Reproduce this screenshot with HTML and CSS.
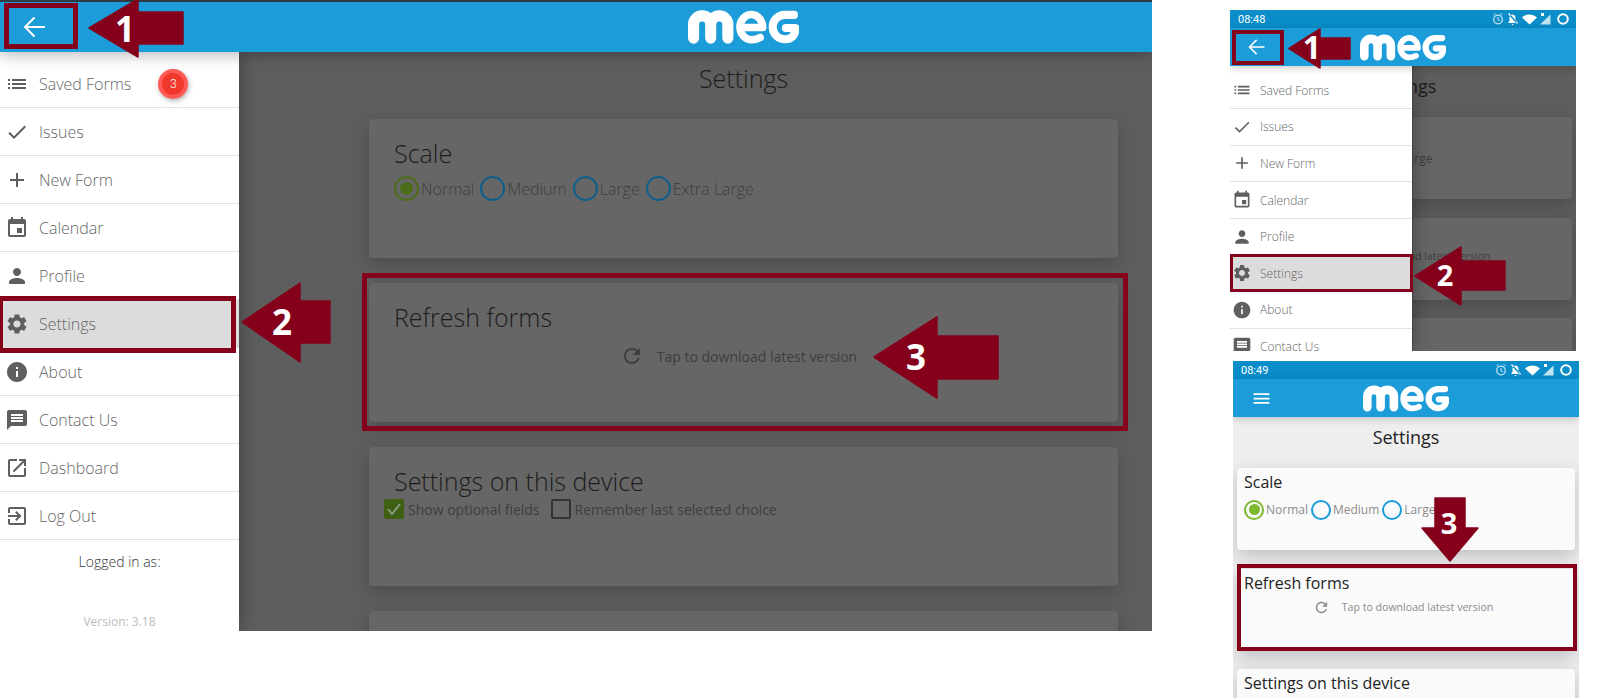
FILE: index.html
```html
<!DOCTYPE html>
<html lang="en">
<head>
  <meta charset="UTF-8" />
  <title>MEG | Refresh forms</title>
  <link rel="stylesheet" href="styles.css">
</head>
<body>
  <svg class="sprites" width="0" height="0">
    <symbol id="logo" viewBox="0 0 110 33">
      <g fill="none" stroke="#fff" stroke-linecap="round" stroke-linejoin="round">
        <path stroke-width="11" d="M5.5 27.5V14a8.5 8.5 0 0 1 17 0v13.5M22.5 14a8.5 8.5 0 0 1 17 0v13.5"/>
        <path stroke-width="7.5" d="M51.5 17H74A11.2 12.5 0 0 0 51.5 16.5 11.5 12.8 0 0 0 63 29.2c3.500 0 6-.7 8.500-2.200"/>
        <path stroke-width="8" d="M105 4.500H96A12 12 0 0 0 96 28.700h1c5.500 0 9.500-4 9.500-11.200H97"/>
      </g>
    </symbol>
    <symbol id="i-list" viewBox="0 0 24 24"><path d="M3 13h2v-2H3v2zm0 4h2v-2H3v2zm0-8h2V7H3v2zm4 4h14v-2H7v2zm0 4h14v-2H7v2zM7 7v2h14V7H7z"/></symbol>
    <symbol id="i-check" viewBox="0 0 24 24"><path d="M9 16.170L4.830 12l-1.420 1.410L9 19 21 7l-1.410-1.410z"/></symbol>
    <symbol id="i-add" viewBox="0 0 24 24"><path d="M19 13h-6v6h-2v-6H5v-2h6V5h2v6h6v2z"/></symbol>
    <symbol id="i-event" viewBox="0 0 24 24"><path d="M17 12h-5v5h5v-5zM16 1v2H8V1H6v2H5c-1.110 0-1.990.9-1.990 2L3 19c0 1.100.89 2 2 2h14c1.100 0 2-.9 2-2V5c0-1.100-.9-2-2-2h-1V1h-2zm3 18H5V8h14v11z"/></symbol>
    <symbol id="i-person" viewBox="0 0 24 24"><path d="M12 12c2.210 0 4-1.790 4-4s-1.790-4-4-4-4 1.790-4 4 1.790 4 4 4zm0 2c-2.670 0-8 1.340-8 4v2h16v-2c0-2.660-5.330-4-8-4z"/></symbol>
    <symbol id="i-settings" viewBox="0 0 24 24"><path d="M19.140 12.940c.04-.3.06-.61.06-.94 0-.32-.02-.64-.07-.94l2.030-1.580c.18-.14.23-.41.12-.61l-1.920-3.320c-.12-.22-.37-.29-.59-.22l-2.390.96c-.5-.38-1.030-.7-1.620-.94l-.36-2.540c-.04-.24-.24-.41-.48-.41h-3.840c-.24 0-.43.17-.47.41l-.36 2.540c-.59.24-1.130.57-1.620.94l-2.390-.96c-.22-.08-.47 0-.59.22L2.740 8.870c-.12.21-.08.47.12.61l2.030 1.580c-.05.3-.09.63-.09.94s.02.64.07.94l-2.030 1.580c-.18.14-.23.41-.12.61l1.920 3.320c.12.22.37.29.59.22l2.390-.96c.5.38 1.030.7 1.620.94l.36 2.54c.05.24.24.41.48.41h3.840c.24 0 .44-.17.47-.41l.36-2.54c.59-.24 1.130-.56 1.620-.94l2.390.96c.22.08.47 0 .59-.22l1.920-3.320c.12-.22.07-.47-.12-.61l-2.010-1.580zM12 15.600c-1.980 0-3.600-1.620-3.600-3.600s1.620-3.600 3.600-3.600 3.600 1.620 3.600 3.600-1.620 3.600-3.600 3.600z"/></symbol>
    <symbol id="i-info" viewBox="0 0 24 24"><path d="M12 2C6.480 2 2 6.480 2 12s4.480 10 10 10 10-4.480 10-10S17.520 2 12 2zm1 15h-2v-6h2v6zm0-8h-2V7h2v2z"/></symbol>
    <symbol id="i-message" viewBox="0 0 24 24"><path d="M20 2H4c-1.100 0-1.990.9-1.990 2L2 22l4-4h14c1.100 0 2-.9 2-2V4c0-1.100-.9-2-2-2zm-2 12H6v-2h12v2zm0-3H6V9h12v2zm0-3H6V6h12v2z"/></symbol>
    <symbol id="i-open" viewBox="0 0 24 24"><path d="M19 19H5V5h7V3H5c-1.110 0-2 .9-2 2v14c0 1.100.89 2 2 2h14c1.100 0 2-.9 2-2v-7h-2v7zM14 3v2h3.590l-9.830 9.830 1.410 1.410L19 6.410V10h2V3h-7z"/></symbol>
    <symbol id="i-exit" viewBox="0 0 24 24"><path d="M10.090 15.590L11.500 17l5-5-5-5-1.410 1.410L12.670 11H3v2h9.670l-2.580 2.590zM19 3H5c-1.110 0-2 .9-2 2v4h2V5h14v14H5v-4H3v4c0 1.100.89 2 2 2h14c1.100 0 2-.9 2-2V5c0-1.100-.9-2-2-2z"/></symbol>
    <symbol id="i-refresh" viewBox="0 0 24 24"><path d="M17.650 6.350C16.200 4.900 14.210 4 12 4c-4.420 0-7.990 3.580-7.990 8s3.570 8 7.990 8c3.730 0 6.840-2.550 7.730-6h-2.080c-.82 2.330-3.040 4-5.650 4-3.310 0-6-2.690-6-6s2.690-6 6-6c1.660 0 3.140.69 4.220 1.780L13 11h7V4l-2.350 2.350z"/></symbol>
    <symbol id="i-menu" viewBox="0 0 24 24"><path d="M3 18h18v-2H3v2zm0-5h18v-2H3v2zm0-7v2h18V6H3z"/></symbol>
    <symbol id="i-back" viewBox="0 0 24 24"><path d="M22 12H2.500M11.500 2.500L2 12l9.500 9.500" fill="none" stroke="#fff" stroke-width="2"/></symbol>
    <symbol id="i-status" viewBox="0 0 80 14">
      <g fill="none" stroke="#fff">
        <circle cx="7" cy="7.500" r="4.300" stroke-width="1.200" opacity=".8"/>
        <path d="M7 5v2.700l1.700 1M2.500 3L4.500 1.300M11.500 3L9.500 1.300" stroke-width="1" opacity=".8"/>
        <circle cx="72" cy="7" r="4.800" stroke-width="2"/>
      </g>
      <g fill="#fff">
        <path d="M17 11h9l-1.500-2V6c0-2-1.400-3.500-3-3.500S18.500 4 18.500 6v3zM20.500 12h2l-1 1.500zM17 2l1-1 9 10-1 1z"/>
        <path d="M31 5.500C33 3.500 36 2.500 38.500 2.500S44 3.500 46 5.500L38.500 12.500z"/>
        <path d="M59.500 2.500v10H49z" opacity=".75"/>
        <path d="M50 1h3v3h-3z"/>
      </g>
    </symbol>
  </svg>

  <div class="board">

    <div class="desktop dimmed">
      <header class="app-bar">
        <div class="bar-left"><svg class="back-icon"><use href="#i-back"/></svg></div>
        <div class="bar-logo"><svg class="logo"><use href="#logo"/></svg></div>
      </header>
      <div class="app-body">
        <aside class="drawer">
          <a class="drawer-item"><svg class="icon"><use href="#i-list"/></svg>Saved Forms<span class="badge">3</span></a>
          <a class="drawer-item"><svg class="icon"><use href="#i-check"/></svg>Issues</a>
          <a class="drawer-item"><svg class="icon"><use href="#i-add"/></svg>New Form</a>
          <a class="drawer-item"><svg class="icon"><use href="#i-event"/></svg>Calendar</a>
          <a class="drawer-item"><svg class="icon"><use href="#i-person"/></svg>Profile</a>
          <a class="drawer-item active"><svg class="icon"><use href="#i-settings"/></svg>Settings</a>
          <a class="drawer-item"><svg class="icon"><use href="#i-info"/></svg>About</a>
          <a class="drawer-item"><svg class="icon"><use href="#i-message"/></svg>Contact Us</a>
          <a class="drawer-item"><svg class="icon"><use href="#i-open"/></svg>Dashboard</a>
          <a class="drawer-item"><svg class="icon"><use href="#i-exit"/></svg>Log Out</a>
          <div class="logged-in">Logged in as:</div>
          <div class="version">Version: 3.18</div>
        </aside>
        <main class="settings">
          <h1 class="settings-title">Settings</h1>
          <section class="card">
            <h2>Scale</h2>
            <div class="radios">
              <span class="radio on"></span><span>Normal</span>
              <span class="radio"></span><span>Medium</span>
              <span class="radio"></span><span>Large</span>
              <span class="radio"></span><span>Extra Large</span>
            </div>
          </section>
          <section class="card">
            <h2>Refresh forms</h2>
            <div class="refresh"><svg class="refresh-icon"><use href="#i-refresh"/></svg>Tap to download latest version</div>
          </section>
          <section class="card">
            <h2>Settings on this device</h2>
            <div class="checks">
              <span class="checkbox on"><svg viewBox="0 0 20 20"><path d="M4 10l4 5 8-10" fill="none" stroke="#8c9a80" stroke-width="2"/></svg></span><span>Show optional fields</span>
              <span class="checkbox"></span><span>Remember last selected choice</span>
            </div>
          </section>
          <section class="card"></section>
        </main>
      </div>
    </div>

    <div class="phones">
      <div class="phone dimmed">
        <div class="status-bar">08:48<svg class="status-icons"><use href="#i-status"/></svg></div>
        <header class="app-bar">
          <div class="bar-left"><svg class="back-icon"><use href="#i-back"/></svg></div>
          <div class="bar-logo"><svg class="logo"><use href="#logo"/></svg></div>
          <div></div>
        </header>
        <main class="settings">
          <h1 class="settings-title">Settings</h1>
          <section class="card">
            <h2>Scale</h2>
            <div class="radios">
              <span class="radio on"></span><span>Normal</span>
              <span class="radio"></span><span>Medium</span>
              <span class="radio"></span><span>Large</span>
            </div>
          </section>
          <section class="card">
            <h2>Refresh forms</h2>
            <div class="refresh"><svg class="refresh-icon"><use href="#i-refresh"/></svg>Tap to download latest version</div>
          </section>
          <section class="card">
            <h2>Settings on this device</h2>
          </section>
        </main>
        <aside class="drawer">
          <a class="drawer-item"><svg class="icon"><use href="#i-list"/></svg>Saved Forms</a>
          <a class="drawer-item"><svg class="icon"><use href="#i-check"/></svg>Issues</a>
          <a class="drawer-item"><svg class="icon"><use href="#i-add"/></svg>New Form</a>
          <a class="drawer-item"><svg class="icon"><use href="#i-event"/></svg>Calendar</a>
          <a class="drawer-item"><svg class="icon"><use href="#i-person"/></svg>Profile</a>
          <a class="drawer-item active"><svg class="icon"><use href="#i-settings"/></svg>Settings</a>
          <a class="drawer-item"><svg class="icon"><use href="#i-info"/></svg>About</a>
          <a class="drawer-item"><svg class="icon"><use href="#i-message"/></svg>Contact Us</a>
        </aside>
      </div>

      <div class="phone phone-light">
        <div class="status-bar">08:49<svg class="status-icons"><use href="#i-status"/></svg></div>
        <header class="app-bar">
          <div class="bar-left"><svg class="menu-icon"><use href="#i-menu"/></svg></div>
          <div class="bar-logo"><svg class="logo"><use href="#logo"/></svg></div>
          <div></div>
        </header>
        <main class="settings">
          <h1 class="settings-title">Settings</h1>
          <section class="card">
            <h2>Scale</h2>
            <div class="radios">
              <span class="radio on"></span><span>Normal</span>
              <span class="radio"></span><span>Medium</span>
              <span class="radio"></span><span>Large</span>
            </div>
          </section>
          <section class="card">
            <h2>Refresh forms</h2>
            <div class="refresh"><svg class="refresh-icon"><use href="#i-refresh"/></svg>Tap to download latest version</div>
          </section>
          <section class="card">
            <h2>Settings on this device</h2>
          </section>
        </main>
      </div>
    </div>

    <!-- annotations drawn on top of the screenshots -->
    <div class="mark mark-back"></div>
    <div class="mark mark-settings"></div>
    <div class="mark mark-refresh"></div>
    <div class="mark thin mark-phone-back"></div>
    <div class="mark thin mark-phone-settings"></div>
    <div class="mark thin mark-phone-refresh"></div>

    <svg class="arrow arrow-1" viewBox="0 0 98 60">
      <polygon points="2,28 51,-1 51,12 96,12 96,44 51,44 51,57"/>
      <text x="38" y="42">1</text>
    </svg>
    <svg class="arrow arrow-2" viewBox="0 0 92 83">
      <polygon points="2,41 60,2 60,20 90,20 90,62 60,62 60,81"/>
      <text x="42" y="53.500">2</text>
    </svg>
    <svg class="arrow arrow-3" viewBox="0 0 127 85">
      <polygon points="2,42 65,2 65,21 126,21 126,64 65,64 65,83"/>
      <text x="44" y="54.500">3</text>
    </svg>
    <svg class="arrow arrow-p1 small" viewBox="0 0 64 41">
      <polygon points="1,20.500 32,1 32,10 62,10 62,31 32,31 32,40"/>
      <text class="big" x="24" y="31">1</text>
    </svg>
    <svg class="arrow arrow-p2 small" viewBox="0 0 93 60">
      <polygon points="1,30 47,1 47,15 91,15 91,44 47,44 47,59"/>
      <text x="31" y="40">2</text>
    </svg>
    <svg class="arrow arrow-p3 small" viewBox="0 0 58 65">
      <polygon points="14,1 44,1 44,31 57,31 29,64 1,31 14,31"/>
      <text x="28" y="37">3</text>
    </svg>
  </div>
</body>
</html>
```

FILE: styles.css
```css
* { box-sizing: border-box; margin: 0; padding: 0; }

body {
  font-family: 'Open Sans', sans-serif;
  background-color: #fff;
}

.sprites { position: absolute; }

.board {
  position: relative;
  display: flex;
  width: 1619px;
  height: 698px;
  overflow: hidden;
  background-color: #fff;
}

/* colours of the settings page, light and behind the open drawer */
.phone-light {
  --page: #eeeeee;
  --card: #fafafa;
  --heading: #222;
  --muted: #8c8c8c;
  --blue: #1b9cda;
  --green: #7cb82f;
}

.dimmed {
  --page: #5e5e5e;
  --card: #666666;
  --heading: #1c1c1c;
  --muted: #3e3e3e;
  --blue: #0e5f8c;
  --green: #4d6e19;
}

/* large screenshot */
.desktop {
  display: flex;
  flex-direction: column;
  flex: none;
  width: 1152px;
  height: 631px;
  overflow: hidden;
  border-top: 2px solid #2f3b40;
}

.app-bar {
  position: relative;
  z-index: 3;
  display: grid;
  align-items: center;
  flex: none;
  background-color: #1c9cd9;
  box-shadow: 0 3px 14px rgba(0, 0, 0, 0.28);
}

.desktop .app-bar {
  grid-template-columns: 334px 1fr;
  height: 50px;
}

.bar-left {
  display: flex;
  align-items: center;
}

.bar-logo {
  display: flex;
  justify-content: center;
}

.desktop .bar-left { padding-left: 23px; }

.back-icon {
  width: 24px;
  height: 24px;
}

.logo {
  display: block;
  width: 111px;
  height: 34px;
}

.app-body {
  display: flex;
  flex: 1;
  min-height: 0;
  overflow: hidden;
}

.drawer {
  position: relative;
  z-index: 2;
  flex: none;
  width: 239px;
  padding-top: 8px;
  background-color: #fff;
  box-shadow: 0 0 18px rgba(0, 0, 0, 0.35);
}

.drawer-item {
  display: flex;
  align-items: center;
  gap: 10px;
  height: 48px;
  padding-left: 5px;
  border-bottom: 1px solid #e2e2e2;
  color: #666;
  font-size: 16px;
  font-weight: 300;
}

.drawer-item.active { background-color: #dcdcdc; }

.icon {
  flex: none;
  width: 24px;
  height: 24px;
  fill: #5f5f5f;
}

.badge {
  display: flex;
  align-items: center;
  justify-content: center;
  width: 30px;
  height: 30px;
  margin-left: 17px;
  border: 4px solid #ff5a55;
  border-radius: 50%;
  background-color: #f0392b;
  box-shadow: 1px 2px 5px rgba(0, 0, 0, 0.3);
  color: #fff;
  font-family: Roboto, sans-serif;
  font-size: 12px;
}

.logged-in {
  margin-top: 12px;
  color: #333;
  font-size: 14px;
  font-weight: 300;
  line-height: 20px;
  text-align: center;
}

.version {
  margin-top: 40px;
  color: #bbb;
  font-size: 12px;
  font-weight: 400;
  line-height: 20px;
  text-align: center;
}

/* settings page */
.settings {
  flex: 1;
  min-width: 0;
  background-color: var(--page);
}

.desktop .settings { padding: 0 34px 0 130px; }

.settings-title {
  color: var(--heading);
  font-size: 25px;
  font-weight: 300;
  line-height: 32px;
  text-align: center;
}

.desktop .settings-title { padding: 10px 0 25px; }

.card {
  flex: none;
  height: 139px;
  margin-bottom: 25px;
  padding: 18px 25px 0;
  border-radius: 4px;
  background-color: var(--card);
  box-shadow: 0 6px 18px rgba(0, 0, 0, 0.2);
}

.card h2 {
  color: var(--heading);
  font-size: 25px;
  font-weight: 300;
  line-height: 33px;
}

.radios {
  display: flex;
  align-items: center;
  margin-top: 6px;
  color: var(--muted);
  font-size: 16px;
  font-weight: 300;
}

.radio {
  position: relative;
  flex: none;
  width: 25px;
  height: 25px;
  margin-right: 2px;
  border: 2px solid var(--blue);
  border-radius: 50%;
}

.radios span:not(.radio) { margin-right: 6px; }

.radio.on { border-color: var(--green); }

.radio.on::after {
  content: '';
  position: absolute;
  inset: 4px;
  border-radius: 50%;
  background-color: var(--green);
}

.refresh {
  display: flex;
  align-items: center;
  justify-content: center;
  gap: 13px;
  margin-top: 10px;
  padding-right: 10px;
  color: var(--muted);
  font-size: 14px;
  font-weight: 400;
}

.refresh-icon {
  width: 24px;
  height: 24px;
  fill: var(--muted);
}

.checks {
  display: flex;
  align-items: center;
  margin: 1px 0 0 -10px;
  color: var(--muted);
  font-size: 14px;
}

.checks span:not(.checkbox) { margin-right: 11px; }

.checkbox {
  flex: none;
  width: 20px;
  height: 20px;
  margin-right: 4px;
  border: 2px solid #333;
  border-radius: 2px;
}

.checkbox.on {
  border: 0;
  background-color: #3f5f12;
}

.checkbox svg { display: block; }

/* phone screenshots */
.phones {
  display: flex;
  flex-direction: column;
  gap: 10px;
  padding: 10px 0 0 78px;
}

.phone {
  position: relative;
  flex: none;
  display: flex;
  flex-direction: column;
  width: 346px;
  height: 341px;
  overflow: hidden;
}

.phone-light {
  height: 337px;
  margin-left: 3px;
}

.status-bar {
  display: flex;
  align-items: center;
  justify-content: space-between;
  flex: none;
  height: 18px;
  padding: 0 5px 0 8px;
  background-color: #0a8dc8;
  color: #fff;
  font-family: Roboto, sans-serif;
  font-size: 11px;
}

.status-icons {
  width: 80px;
  height: 14px;
}

.phone .app-bar {
  grid-template-columns: 1fr auto 1fr;
  height: 38px;
  box-shadow: 0 2px 8px rgba(0, 0, 0, 0.2);
}

.phone .logo {
  width: 86px;
  height: 27px;
}

.phone .bar-left { padding-left: 18px; }

.phone .back-icon {
  width: 18px;
  height: 18px;
}

.menu-icon {
  width: 21px;
  height: 21px;
  fill: #fff;
}

.phone .settings { padding: 0 4px; }

.phone .settings-title {
  padding: 7px 0 18px;
  font-size: 18px;
  font-weight: 400;
  line-height: 26px;
}

.phone .card {
  height: 82px;
  margin-bottom: 18.500px;
  padding: 3px 7px 0;
}

.phone .card h2 {
  font-size: 16px;
  font-weight: 400;
  line-height: 22px;
}

.phone .radios {
  margin-top: 6.500px;
  font-size: 12px;
  font-weight: 400;
}

.phone .radio {
  width: 20px;
  height: 20px;
  margin-right: 2px;
}

.phone .radio.on::after { inset: 2.500px; }

.phone .radios span:not(.radio) { margin-right: 3px; }

.phone .refresh {
  gap: 12px;
  margin-top: 5px;
  padding-right: 6px;
  font-size: 10.600px;
}

.phone .refresh-icon {
  width: 17px;
  height: 17px;
}

.phone .drawer {
  position: absolute;
  top: 56px;
  bottom: 0;
  left: 0;
  width: 183px;
  padding-top: 6.500px;
  border-right: 1px solid #444;
}

.phone .drawer-item {
  gap: 8px;
  height: 36.600px;
  padding-left: 2px;
  font-size: 12px;
}

.phone .icon {
  width: 20px;
  height: 20px;
}

/* red annotations */
.mark {
  position: absolute;
  z-index: 5;
  border: 5px solid #85001a;
}

.mark.thin { border-width: 3px; }

.mark-back { left: 4px; top: 3px; width: 74px; height: 46px; }
.mark-settings { left: -2px; top: 296px; width: 238px; height: 57px; }
.mark-refresh { left: 362px; top: 273px; width: 766px; height: 158px; }
.mark.thin.mark-phone-back { left: 1232px; top: 30px; width: 52px; height: 35px; border-width: 4px; }
.mark-phone-settings { left: 1230px; top: 254px; width: 183px; height: 38px; }
.mark.thin.mark-phone-refresh { left: 1237px; top: 564px; width: 340px; height: 87px; border-width: 4px; }

.arrow {
  position: absolute;
  z-index: 6;
  overflow: visible;
}

.arrow polygon {
  fill: #85001a;
  stroke: #85001a;
  stroke-width: 1.500;
  stroke-linejoin: round;
}

.arrow text {
  fill: #fff;
  font-family: 'Open Sans', sans-serif;
  font-size: 35px;
  font-weight: 700;
  text-anchor: middle;
}

.arrow.small text { font-size: 29px; }
.arrow.small text.big { font-size: 32px; }

.arrow-1 { left: 87px; top: 0; width: 98px; height: 60px; }
.arrow-2 { left: 240px; top: 281px; width: 92px; height: 83px; }
.arrow-3 { left: 872px; top: 315px; width: 127px; height: 85px; }
.arrow-p1 { left: 1288px; top: 28px; width: 64px; height: 41px; }
.arrow-p2 { left: 1414px; top: 246px; width: 93px; height: 60px; }
.arrow-p3 { left: 1421px; top: 497px; width: 58px; height: 65px; }
```
